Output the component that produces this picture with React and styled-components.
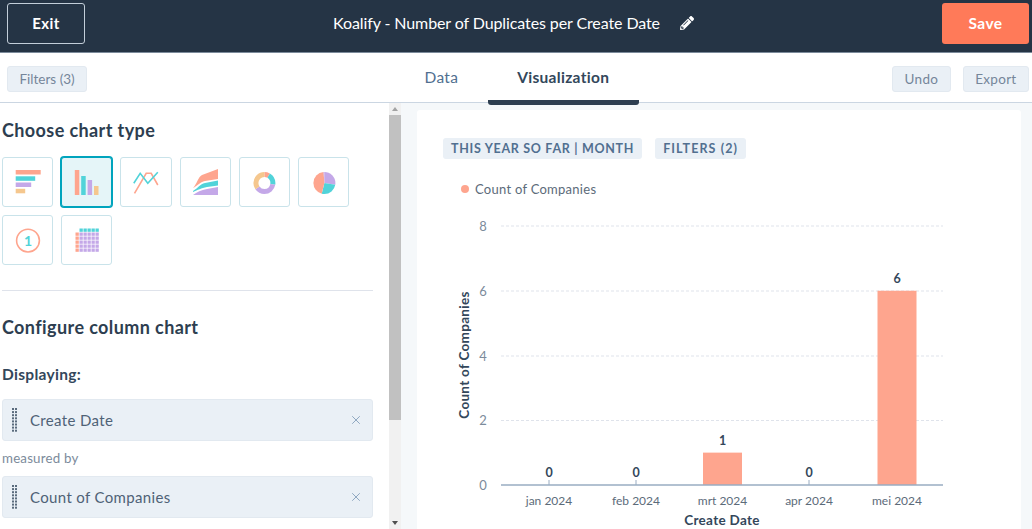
import React from "react";
import styled, { createGlobalStyle } from "styled-components";
import { FaPencilAlt } from "react-icons/fa";
import { X } from "lucide-react";

const PEACH = "#fea58e";
const TEAL = "#51d3d9";
const PURPLE = "#c4a8e8";
const TAN = "#f5c78e";

const GlobalStyle = createGlobalStyle`
  html, body { margin: 0; padding: 0; background: #fff; }
  body { font-family: Lato, "Noto Sans", sans-serif; color: #33475b; }
  * { box-sizing: border-box; }
`;

const Page = styled.div`
  width: 1032px;
  height: 529px;
  overflow: hidden;
  display: flex;
  flex-direction: column;
`;

const TopBar = styled.header`
  height: 53px;
  flex: none;
  display: flex;
  align-items: flex-start;
  padding: 3px 3px 0 7px;
  background: #253445;
  border-bottom: 1px solid #7c8b9b;
`;

const ExitButton = styled.button`
  width: 78px;
  height: 41px;
  padding: 0 0 2px;
  background: transparent;
  border: 1px solid #c3ced9;
  border-radius: 3px;
  color: #fff;
  font: 700 15px Lato, sans-serif;
  letter-spacing: 0.4px;
`;

const SaveButton = styled.button`
  width: 87px;
  height: 41px;
  padding: 0 0 2px;
  background: #ff7a59;
  border: none;
  border-radius: 3px;
  color: #fff;
  font: 700 15.5px Lato, sans-serif;
  letter-spacing: 0.4px;
`;

const Title = styled.div`
  flex: 1;
  height: 41px;
  padding-bottom: 2px;
  display: flex;
  align-items: center;
  justify-content: center;
  gap: 20px;
  color: #fff;
  font-size: 16px;
  letter-spacing: -0.1px;
`;

const SubBar = styled.nav`
  height: 50px;
  flex: none;
  display: grid;
  grid-template-columns: 395px auto 1fr;
  align-items: stretch;
  padding: 0 3px 0 0;
  border-bottom: 1px solid #cbd6e2;
`;

const GhostButton = styled.button`
  height: 26px;
  padding: 0 ${(p) => p.$pad}px;
  background: #eaf0f6;
  border: 1px solid #e2e9f0;
  border-radius: 3px;
  color: #75869a;
  font: 400 13.5px Lato, sans-serif;
  letter-spacing: ${(p) => p.$spacing}px;
`;

const SubLeft = styled.div`
  display: flex;
  align-items: center;
  padding: 0 0 0 7px;
`;

const SubRight = styled.div`
  display: flex;
  align-items: center;
  justify-content: flex-end;
  gap: 12px;
`;

const Tabs = styled.div`
  display: flex;
  position: relative;
  z-index: 1;
`;

const Tab = styled.div`
  display: flex;
  align-items: center;
  padding: 0 29.5px;
  font-size: 15.5px;
  letter-spacing: 0.3px;
  font-weight: ${(p) => (p.$active ? 700 : 400)};
  color: ${(p) => (p.$active ? "#33475b" : "#516f90")};
  border-bottom: 5px solid ${(p) => (p.$active ? "#2d3e50" : "transparent")};
  border-radius: 0 0 3px 3px;
  height: 52px;
`;

const Body = styled.div`
  flex: 1;
  min-height: 0;
  display: flex;
`;

const Sidebar = styled.aside`
  width: 389px;
  flex: none;
  padding: 0 16px 0 2px;
  overflow: hidden;
`;

const Heading = styled.h2`
  margin: ${(p) => p.$top}px 0 0;
  font-size: 18px;
  line-height: 24px;
  font-weight: 700;
  color: #2d3e50;
  letter-spacing: 0.4px;
`;

const ChartGrid = styled.div`
  display: grid;
  grid-template-columns: repeat(6, 51.2px);
  grid-auto-rows: 50px;
  gap: 8px;
  margin-top: 15px;
`;

const ChartButton = styled.div`
  display: flex;
  align-items: center;
  justify-content: center;
  border: 1px solid #c9e3ea;
  border-radius: 3px;
  background: #fff;
  ${(p) =>
    p.$selected &&
    `background: #e5f5f8;
     border: 1px solid #00a4bd;
     box-shadow: 0 0 0 1px #00a4bd;`}
`;

const Divider = styled.hr`
  margin: 25px 0 0;
  border: none;
  border-top: 1px solid #dfe3eb;
`;

const Label = styled.div`
  margin-top: 25px;
  font-size: 15.5px;
  line-height: 20px;
  font-weight: 700;
  color: #33475b;
  letter-spacing: 0.3px;
`;

const Field = styled.div`
  height: 42px;
  display: flex;
  align-items: center;
  padding: 0 9px;
  margin-top: ${(p) => p.$top}px;
  background: #eaf0f6;
  border: 1px solid #e2e9f0;
  border-radius: 3px;
  color: #4f6276;
  font-size: 15px;
  letter-spacing: 0.35px;
`;

const FieldName = styled.span`
  flex: 1;
  margin-left: 13px;
`;

const Measured = styled.div`
  margin-top: 8px;
  font-size: 13.3px;
  line-height: 18px;
  color: #7c8b9b;
  letter-spacing: 0.2px;
`;

const Scrollbar = styled.div`
  width: 12px;
  flex: none;
  display: flex;
  flex-direction: column;
  align-items: center;
  background: #f1f1f1;
`;

const ScrollArrow = styled.div`
  height: 12px;
  width: 100%;
  flex: none;
  display: flex;
  align-items: center;
  justify-content: center;
  &::before {
    content: "";
    border-left: 3px solid transparent;
    border-right: 3px solid transparent;
    ${(p) => (p.$down ? "border-top: 4px solid #505050;" : "border-bottom: 4px solid #a3a3a3;")}
  }
`;

const ScrollThumb = styled.div`
  width: 100%;
  height: 305px;
  background: #c1c1c1;
`;

const ScrollRest = styled.div`
  flex: 1;
`;

const Stage = styled.main`
  flex: 1;
  min-width: 0;
  padding: 7px 11px 0 16px;
  background: #f5f8fa;
`;

const Card = styled.section`
  height: 100%;
  background: #fff;
  padding: 28px 0 0 26px;
  border-radius: 3px 3px 0 0;
`;

const ChipRow = styled.div`
  display: flex;
  gap: 13px;
`;

const Chip = styled.div`
  height: 21px;
  padding: 0 8px;
  display: flex;
  align-items: center;
  background: #eaf0f6;
  border-radius: 3px;
  color: #516f90;
  font-size: 12.5px;
  font-weight: 700;
  letter-spacing: ${(p) => p.$spacing}px;
`;

const Legend = styled.div`
  display: flex;
  align-items: center;
  gap: 6px;
  margin: 21px 0 0 18px;
  height: 18px;
  font-size: 13px;
  letter-spacing: 0.27px;
  color: #5c6b7a;
`;

const LegendDot = styled.span`
  width: 8px;
  height: 8px;
  border-radius: 50%;
  background: ${PEACH};
`;

const ChartSvg = styled.svg`
  display: block;
  font-family: Lato, sans-serif;
`;

const Shell = ({ children }) => (
  <svg width="30" height="30" viewBox="0 0 30 30">
    {children}
  </svg>
);

const BarIcon = () => (
  <Shell>
    <rect x="2.7" y="3" width="25" height="4.5" fill={PEACH} />
    <rect x="2.7" y="9.3" width="19.5" height="4.5" fill={TEAL} />
    <rect x="2.7" y="15.5" width="15.5" height="4.5" fill={PURPLE} />
    <rect x="2.7" y="21.8" width="9.5" height="4.5" fill={TAN} />
  </Shell>
);

const ColumnIcon = () => (
  <Shell>
    <rect x="2.8" y="3" width="4.5" height="25" fill={PEACH} />
    <rect x="9.2" y="9" width="4.5" height="19" fill={TEAL} />
    <rect x="15.6" y="13" width="4.5" height="15" fill={PURPLE} />
    <rect x="22" y="19" width="4.5" height="9" fill={TAN} />
  </Shell>
);

const LineIcon = () => (
  <Shell>
    <polyline points="3.5,26.3 15.2,6.3 20.2,6.3 26.8,18" fill="none" stroke={PEACH} strokeWidth="1.6" />
    <polyline points="2.8,16.3 9.2,6.3 16.8,16.3 26.8,5.3" fill="none" stroke={TEAL} strokeWidth="1.6" />
  </Shell>
);

const AreaIcon = () => (
  <Shell>
    <g transform="translate(1 1)">
      <path d="M2 20 C6 16 7 9 11 7 L27 1 V11 L14 13 C9 14 6 18 2 20 Z" fill={PEACH} />
      <path d="M2 23 C7 20 9 16 14 15 L27 12.5 V17.5 L16 19 C10 20 7 22 2 24 Z" fill={TEAL} />
      <path d="M2 27 C6 24 10 22 16 21 L27 19 V27 Z" fill={PURPLE} />
    </g>
  </Shell>
);

// one slice of a ring, angles in degrees clockwise from 12 o'clock
const Slice = ({ r, width, from, to, color }) => (
  <circle
    cx="15.4"
    cy="16"
    r={r}
    fill="none"
    stroke={color}
    strokeWidth={width}
    pathLength="360"
    strokeDasharray={`${to - from} 360`}
    strokeDashoffset={-from}
    transform="rotate(-90 15.4 16)"
  />
);

const DonutIcon = () => (
  <Shell>
    <Slice r={8.5} width={5} from={0} to={30} color={PEACH} />
    <Slice r={8.5} width={5} from={30} to={100} color={TEAL} />
    <Slice r={8.5} width={5} from={100} to={235} color={PURPLE} />
    <Slice r={8.5} width={5} from={235} to={360} color={TAN} />
  </Shell>
);

const PieIcon = () => (
  <Shell>
    <Slice r={5.5} width={11} from={0} to={100} color={PURPLE} />
    <Slice r={5.5} width={11} from={100} to={195} color={TEAL} />
    <Slice r={5.5} width={11} from={195} to={355} color={PEACH} />
    <Slice r={5.5} width={11} from={355} to={360} color={PURPLE} />
  </Shell>
);

const NumberIcon = () => (
  <Shell>
    <circle cx="15" cy="15.6" r="11.4" fill="none" stroke={PEACH} strokeWidth="1.6" />
    <text x="15" y="20.6" textAnchor="middle" fontFamily="Lato, sans-serif" fontSize="14" fontWeight="700" fill={TEAL}>1</text>
  </Shell>
);

const TableIcon = () => {
  const cells = [];
  for (let r = 0; r < 6; r++) {
    for (let c = 0; c < 6; c++) {
      if (c === 0 && r === 0) continue;
      const fill = r === 0 ? TEAL : c === 0 ? PEACH : PURPLE;
      cells.push(<rect key={`${r}-${c}`} x={3.5 + c * 4} y={3.5 + r * 4} width="3.3" height="3.3" fill={fill} />);
    }
  }
  return <Shell>{cells}</Shell>;
};

const Grip = () => (
  <svg width="5" height="24" viewBox="0 0 5 24">
    {[0, 1, 2, 3, 4, 5, 6, 7].map((r) =>
      [0, 3].map((c) => <rect key={`${r}${c}`} x={c} y={r * 3.1} width="2" height="2" fill="#5a6b7d" />)
    )}
  </svg>
);

const chartTypes = [
  { Icon: BarIcon },
  { Icon: ColumnIcon, selected: true },
  { Icon: LineIcon },
  { Icon: AreaIcon },
  { Icon: DonutIcon },
  { Icon: PieIcon },
  { Icon: NumberIcon },
  { Icon: TableIcon },
];

const ticks = [
  { label: "8", y: 226 },
  { label: "6", y: 291 },
  { label: "4", y: 356 },
  { label: "2", y: 420.5 },
  { label: "0", y: 485 },
];

const months = [
  { label: "jan 2024", x: 549, value: 0 },
  { label: "feb 2024", x: 636, value: 0 },
  { label: "mrt 2024", x: 722.5, value: 1 },
  { label: "apr 2024", x: 809, value: 0 },
  { label: "mei 2024", x: 897, value: 6 },
];

const UNIT = (485 - 226) / 8;

// viewBox uses page coordinates so the chart numbers read straight off the screen
const Chart = () => (
  <ChartSvg width="560" height="331" viewBox="443 198 560 331">
    {ticks.map((t) => (
      <g key={t.label}>
        {t.label !== "0" && <line x1="501" x2="943" y1={t.y} y2={t.y} stroke="#dfe3eb" strokeDasharray="3 2" />}
        <text x="483" y={t.y + 4.5} textAnchor="middle" fontSize="13" fill="#7c8b9b">{t.label}</text>
      </g>
    ))}
    {months.map((m) => {
      const h = m.value * UNIT;
      return (
        <g key={m.label}>
          {m.value > 0 ? (
            <rect x={m.x - 19.5} y={485 - h} width="39" height={h} fill={PEACH} />
          ) : (
            <line x1={m.x} x2={m.x} y1="480" y2="485" stroke="#99acc2" />
          )}
          <text x={m.x} y={485 - h - 8} textAnchor="middle" fontSize="12.5" fontWeight="700" fill="#33475b">{m.value}</text>
          <text x={m.x} y="505" textAnchor="middle" fontSize="12" fill="#5c6b7a">{m.label}</text>
        </g>
      );
    })}
    <line x1="501" x2="943" y1="485" y2="485" stroke="#99acc2" strokeWidth="1.6" />
    <text x="722" y="525" textAnchor="middle" fontSize="13.5" fontWeight="700" letterSpacing="0.3" fill="#33475b">Create Date</text>
    <text transform="translate(469 355) rotate(-90)" textAnchor="middle" fontSize="13.5" fontWeight="700" letterSpacing="0.3" fill="#33475b">Count of Companies</text>
  </ChartSvg>
);

export default function App() {
  return (
    <Page>
      <GlobalStyle />
      <TopBar>
        <ExitButton>Exit</ExitButton>
        <Title>
          Koalify - Number of Duplicates per Create Date
          <FaPencilAlt size={14} />
        </Title>
        <SaveButton>Save</SaveButton>
      </TopBar>
      <SubBar>
        <SubLeft>
          <GhostButton $pad={11.5} $spacing={0}>Filters (3)</GhostButton>
        </SubLeft>
        <Tabs>
          <Tab>Data</Tab>
          <Tab $active>Visualization</Tab>
        </Tabs>
        <SubRight>
          <GhostButton $pad={11.5} $spacing={0.3}>Undo</GhostButton>
          <GhostButton $pad={11.5} $spacing={0.3}>Export</GhostButton>
        </SubRight>
      </SubBar>
      <Body>
        <Sidebar>
          <Heading $top={15}>Choose chart type</Heading>
          <ChartGrid>
            {chartTypes.map(({ Icon, selected }, i) => (
              <ChartButton key={i} $selected={selected}>
                <Icon />
              </ChartButton>
            ))}
          </ChartGrid>
          <Divider />
          <Heading $top={24}>Configure column chart</Heading>
          <Label>Displaying:</Label>
          <Field $top={15}>
            <Grip />
            <FieldName>Create Date</FieldName>
            <X size={14} strokeWidth={1.4} color="#7c98b6" />
          </Field>
          <Measured>measured by</Measured>
          <Field $top={9}>
            <Grip />
            <FieldName>Count of Companies</FieldName>
            <X size={14} strokeWidth={1.4} color="#7c98b6" />
          </Field>
        </Sidebar>
        <Scrollbar>
          <ScrollArrow />
          <ScrollThumb />
          <ScrollRest />
          <ScrollArrow $down />
        </Scrollbar>
        <Stage>
          <Card>
            <ChipRow>
              <Chip $spacing={0.7}>THIS YEAR SO FAR | MONTH</Chip>
              <Chip $spacing={1.1}>FILTERS (2)</Chip>
            </ChipRow>
            <Legend>
              <LegendDot />
              Count of Companies
            </Legend>
            <Chart />
          </Card>
        </Stage>
      </Body>
    </Page>
  );
}
